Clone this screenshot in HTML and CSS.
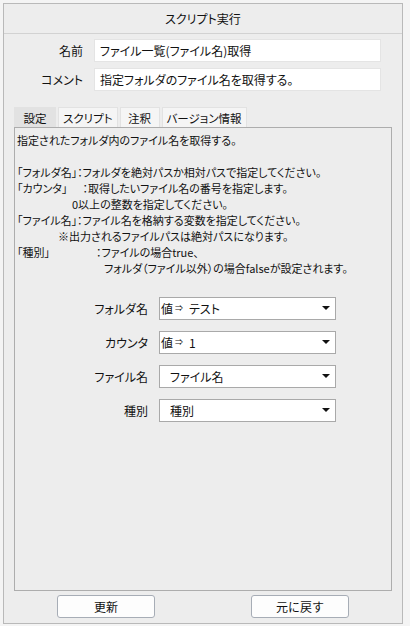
FILE: index.html
```html
<!DOCTYPE html>
<html lang="ja">
  <head>
    <meta charset="UTF-8" />
    <meta name="viewport" content="width=device-width, initial-scale=1.0" />
    <title>スクリプト実行</title>
    <link rel="stylesheet" href="styles.css">
  </head>
  <body>
    <div class="window">
      <div class="title">スクリプト実行</div>

      <div class="fields">
        <div class="field">
          <span class="field-label">名前</span>
          <div class="textbox">ファイル一覧(ファイル名)取得</div>
        </div>
        <div class="field">
          <span class="field-label">コメント</span>
          <div class="textbox">指定フォルダのファイル名を取得する。</div>
        </div>
      </div>

      <div class="tabs">
        <div class="tab active">設定</div>
        <div class="tab">スクリプト</div>
        <div class="tab">注釈</div>
        <div class="tab">バージョン情報</div>
      </div>

      <div class="tab-panel">
        <div class="desc">
          <div class="line">指定されたフォルダ内のファイル名を取得する。</div>
          <div class="line">&nbsp;</div>
          <div class="line">「フォルダ名」：フォルダを絶対パスか相対パスで指定してください。</div>
          <div class="line"><span class="key">「カウンタ」</span><span class="gap-1">：取得したいファイル名の番号を指定します。</span></div>
          <div class="line indent-count">0以上の整数を指定してください。</div>
          <div class="line">「ファイル名」：ファイル名を格納する変数を指定してください。</div>
          <div class="line indent-note">※出力されるファイルパスは絶対パスになります。</div>
          <div class="line"><span class="key">「種別」</span><span class="gap-2">：ファイルの場合true、</span></div>
          <div class="line indent-kind">フォルダ（ファイル以外）の場合falseが設定されます。</div>
        </div>

        <div class="params">
          <div class="param">
            <span class="param-label">フォルダ名</span>
            <div class="combo">
              <span class="prefix">値<small>⇒</small></span><span class="value">テスト</span>
              <span class="arrow"></span>
            </div>
          </div>
          <div class="param">
            <span class="param-label">カウンタ</span>
            <div class="combo">
              <span class="prefix">値<small>⇒</small></span><span class="value">1</span>
              <span class="arrow"></span>
            </div>
          </div>
          <div class="param">
            <span class="param-label">ファイル名</span>
            <div class="combo">
              <span class="value plain">ファイル名</span>
              <span class="arrow"></span>
            </div>
          </div>
          <div class="param">
            <span class="param-label">種別</span>
            <div class="combo">
              <span class="value plain">種別</span>
              <span class="arrow"></span>
            </div>
          </div>
        </div>
      </div>

      <div class="buttons">
        <button class="btn">更新</button>
        <button class="btn">元に戻す</button>
      </div>
    </div>
  </body>
</html>
```

FILE: styles.css
```css
body {
  margin: 0;
  background-color: #f4f4f4;
  font-family: "Noto Sans CJK JP", "Noto Sans", sans-serif;
  font-size: 11px;
  font-feature-settings: "palt";
  color: #111;
}

.window {
  display: flex;
  flex-direction: column;
  margin: 3px 0 0 3px;
  width: 398px;
  height: 619px;
  border: 1px solid #b9b9b9;
  background-color: #ededed;
}

.title {
  height: 29px;
  line-height: 29px;
  text-align: center;
  border-bottom: 1px solid #d2d2d2;
  font-size: 12px;
}

.fields {
  display: flex;
  flex-direction: column;
  gap: 6px;
  margin-top: 5px;
}

.field {
  display: flex;
  align-items: center;
}

.field-label {
  width: 79px;
  margin-right: 11px;
  text-align: right;
  font-size: 12px;
}

.textbox {
  width: 280px;
  height: 21px;
  line-height: 21px;
  padding-left: 5px;
  background-color: #fff;
  border: 1px solid #e4e4e4;
  font-size: 12px;
}

.tabs {
  display: flex;
  margin: 16px 0 0 10px;
  height: 20px;
}

.tab {
  box-sizing: border-box;
  min-width: 40px;
  padding: 0 4px;
  line-height: 20px;
  text-align: center;
  background-color: #f5f5f5;
  border: 1px solid #e2e2e2;
  border-bottom: none;
  margin-left: 2px;
  font-size: 11.5px;
}

.tab.active {
  margin-left: 0;
  min-width: 42px;
  background-color: #e2e2e2;
  border-color: #e2e2e2;
}

.tab-panel {
  flex: 1;
  margin: 0 10px;
  border: 1px solid #adadad;
  background-color: #ededed;
}

.desc {
  padding: 4px 0 0 2px;
}

.line {
  height: 16px;
  line-height: 16px;
  white-space: nowrap;
}

.key {
  display: inline-block;
}

.gap-1 {
  margin-left: 15px;
}

.gap-2 {
  margin-left: 46px;
}

.indent-count {
  padding-left: 55px;
}

.indent-note {
  padding-left: 41px;
}

.indent-kind {
  padding-left: 87px;
}

.params {
  display: flex;
  flex-direction: column;
  gap: 11px;
  margin-top: 21px;
}

.param {
  display: flex;
  align-items: center;
}

.param-label {
  width: 133px;
  margin-right: 11px;
  text-align: right;
  font-size: 12px;
}

.combo {
  position: relative;
  display: flex;
  align-items: center;
  width: 175px;
  height: 21px;
  background-color: #fff;
  border: 1px solid #a9a9a9;
  font-size: 12px;
}

.prefix {
  margin-left: 1px;
  font-size: 12px;
}

.prefix small {
  font-size: 8px;
  vertical-align: 3px;
  margin-left: 2px;
}

.value {
  margin-left: 6px;
}

.value.plain {
  margin-left: 10px;
}

.arrow {
  position: absolute;
  right: 5px;
  top: 8px;
  border-left: 4px solid transparent;
  border-right: 4px solid transparent;
  border-top: 4px solid #111;
}

.buttons {
  display: flex;
  justify-content: space-between;
  padding: 4px 53px 0 53px;
  height: 28px;
}

.btn {
  width: 98px;
  height: 23px;
  padding: 0;
  background-color: #fdfdfd;
  border: 1px solid #a7adb6;
  border-radius: 3px;
  font-family: "Noto Sans CJK JP", sans-serif;
  font-size: 12px;
  color: #111;
}
```
